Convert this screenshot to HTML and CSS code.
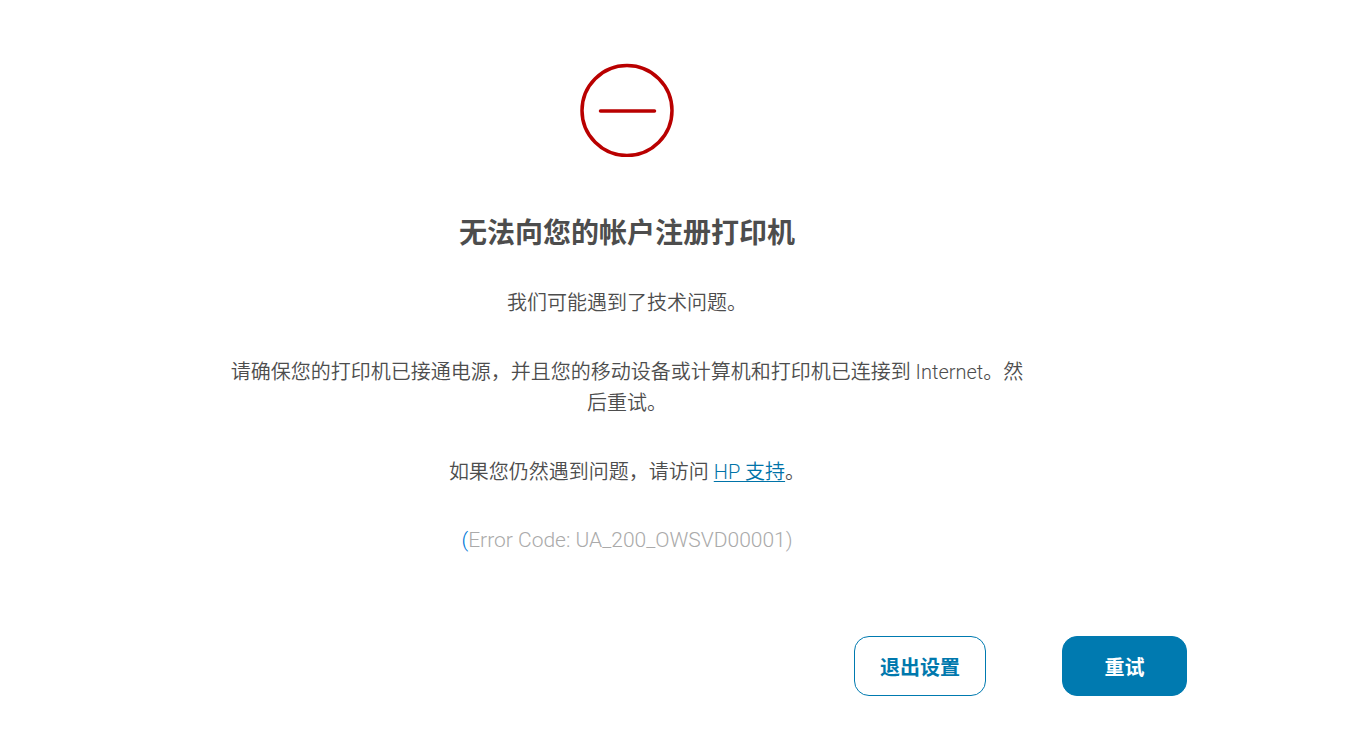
FILE: index.html
```html
<!DOCTYPE html>
<html lang="zh-CN">
<head>
    <meta charset="UTF-8">
    <meta name="viewport" content="width=device-width, initial-scale=1">
    <title>无法向您的帐户注册打印机</title>
    <link rel="stylesheet" href="styles.css">
</head>
<body>
<main class="page">
    <section class="message">
        <svg class="error-icon" viewBox="0 0 94 94" aria-hidden="true">
            <circle cx="47" cy="47.5" r="45"/>
            <path d="M20.5 48H74.5"/>
        </svg>
        <h1>无法向您的帐户注册打印机</h1>
        <p>我们可能遇到了技术问题。</p>
        <p>请确保您的打印机已接通电源，并且您的移动设备或计算机和打印机已连接到 Internet。然后重试。</p>
        <p>如果您仍然遇到问题，请访问 <a href="#">HP 支持</a>。</p>
        <p class="code"><span class="paren">(</span>Error Code: UA_200_OWSVD00001)</p>
    </section>
    <div class="actions">
        <button type="button" class="btn">退出设置</button>
        <button type="button" class="btn primary">重试</button>
    </div>
</main>
</body>
</html>
```
FILE: styles.css
```css
body {
    margin: 0;
    background: #fff;
    color: #4d4d4d;
    font-family: Roboto, "Noto Sans CJK SC", sans-serif;
    font-size: 20px;
    font-weight: 350;
    line-height: 31px;
}

.page {
    margin-right: 92px;
    padding-top: 63px;
}

.message {
    max-width: 800px;
    margin: 0 auto;
    text-align: center;
}

.error-icon {
    display: block;
    width: 94px;
    height: 94px;
    margin: 0 auto;
    fill: none;
    stroke: #b90000;
    stroke-width: 3.5;
    stroke-linecap: round;
}

h1 {
    margin: 59px 0 36px;
    font-size: 28px;
    font-weight: 700;
    line-height: 36px;
}

p {
    margin: 0 0 38px;
}

.message a {
    color: #0073a8;
    text-decoration-thickness: 1px;
    text-underline-offset: 2px;
}

.message .code {
    margin: 0;
    color: #aaa;
    font-size: 21px;
    font-weight: 300;
    line-height: 28px;
}

.paren {
    color: #0078d7;
}

.actions {
    display: flex;
    justify-content: flex-end;
    gap: 76px;
    margin: 82px 67px 52px 0;
}

.btn {
    min-width: 125px;
    height: 60px;
    padding: 0 25px;
    border: 1px solid #007ab0;
    border-radius: 15px;
    background: #fff;
    color: #0078ad;
    font-family: inherit;
    font-size: 20px;
    font-weight: 700;
    cursor: pointer;
}

.btn.primary {
    background: #007ab0;
    color: #fff;
}
```
